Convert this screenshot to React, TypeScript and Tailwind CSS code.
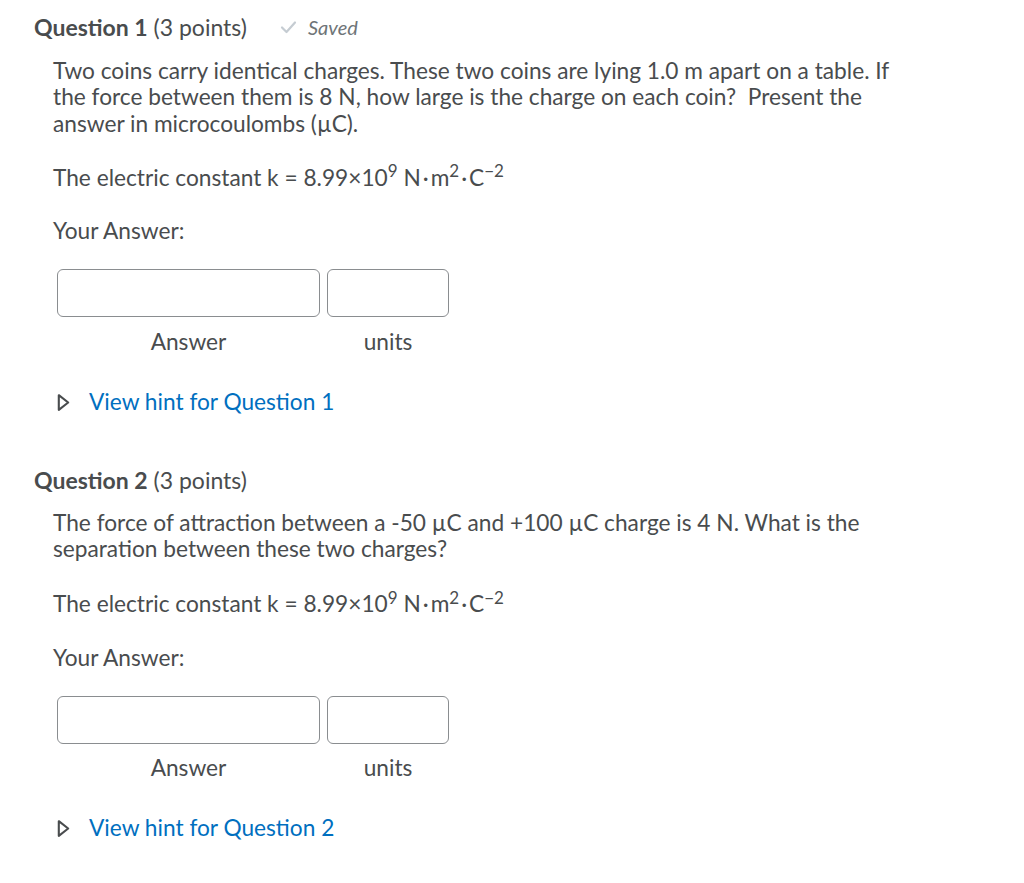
import React from "react";

const textColor = "text-[#494c4e]";

function Sup({ children }: { children: React.ReactNode }) {
  return <sup className="text-[0.75em]">{children}</sup>;
}

function Constant() {
  return (
    <p className="leading-[26.5px]">
      The electric constant k = 8.99×10<Sup>9</Sup> N<span className="mx-[2px]">·</span>m<Sup>2</Sup><span className="mx-[2px]">·</span>C<Sup>−2</Sup>
    </p>
  );
}

function AnswerRow() {
  return (
    <div className="flex gap-[7px] ml-[4px]">
      <div className="flex flex-col items-center">
        <div className="w-[263px] h-[48px] border border-[#8a8d90] rounded-[6px] bg-white" />
        <span className="mt-[11.75px] leading-[26.5px]">Answer</span>
      </div>
      <div className="flex flex-col items-center">
        <div className="w-[122px] h-[48px] border border-[#8a8d90] rounded-[6px] bg-white" />
        <span className="mt-[11.75px] leading-[26.5px]">units</span>
      </div>
    </div>
  );
}

function Hint({ n }: { n: number }) {
  return (
    <div className="flex items-center leading-[26.5px] mt-[33.5px] ml-[4px]">
      <svg width="13" height="19" viewBox="0 0 13 19" className="mr-[19px]">
        <path d="M1.8 2.2 L11.2 9.5 L1.8 16.8 Z" fill="none" stroke="#494c4e" strokeWidth="2.1" strokeLinejoin="round" />
      </svg>
      <span className="text-[#006fbf]">View hint for Question {n}</span>
    </div>
  );
}

export default function App() {
  return (
    <div
      className={`bg-white min-h-[883px] w-[1024px] ${textColor} pl-[34px] pt-[12px] text-[22.7px]`}
      style={{ fontFamily: "Lato, 'Open Sans', sans-serif" }}
    >
      <div className="flex items-center leading-[30px] text-[23px]">
        <span>
          <span className="font-bold">Question 1</span> (3 points)
        </span>
        <span className="ml-[33px] flex items-center text-[20px] italic text-[#6e7477]">
          <svg width="17" height="14" viewBox="0 0 17 14" className="mr-[11px]">
            <path d="M2 7.5 L6.5 12 L15 2.5" fill="none" stroke="#c5ccd2" strokeWidth="2.2" strokeLinecap="round" strokeLinejoin="round" />
          </svg>
          Saved
        </span>
      </div>
      <div className="ml-[19px]">
        <p className="mt-[15.75px] leading-[26.5px] w-[850px]">
          Two coins carry identical charges. These two coins are lying 1.0 m apart on a table. If the force between them is 8 N, how large is the charge on each coin?&nbsp; Present the answer in microcoulombs (µC).
        </p>
        <div className="mt-[27.5px]">
          <Constant />
        </div>
        <p className="mt-[26.5px] leading-[26.5px]">Your Answer:</p>
        <div className="mt-[24.75px]">
          <AnswerRow />
        </div>
        <Hint n={1} />
      </div>

      <div className="mt-[49.75px] leading-[30px] text-[23px]">
        <span className="font-bold">Question 2</span> (3 points)
      </div>
      <div className="ml-[19px]">
        <p className="mt-[14.75px] leading-[26.5px] w-[850px]">
          The force of attraction between a -50 µC and +100 µC charge is 4 N. What is the separation between these two charges?
        </p>
        <div className="mt-[28.5px]">
          <Constant />
        </div>
        <p className="mt-[27.5px] leading-[26.5px]">Your Answer:</p>
        <div className="mt-[23.75px]">
          <AnswerRow />
        </div>
        <Hint n={2} />
      </div>
    </div>
  );
}
